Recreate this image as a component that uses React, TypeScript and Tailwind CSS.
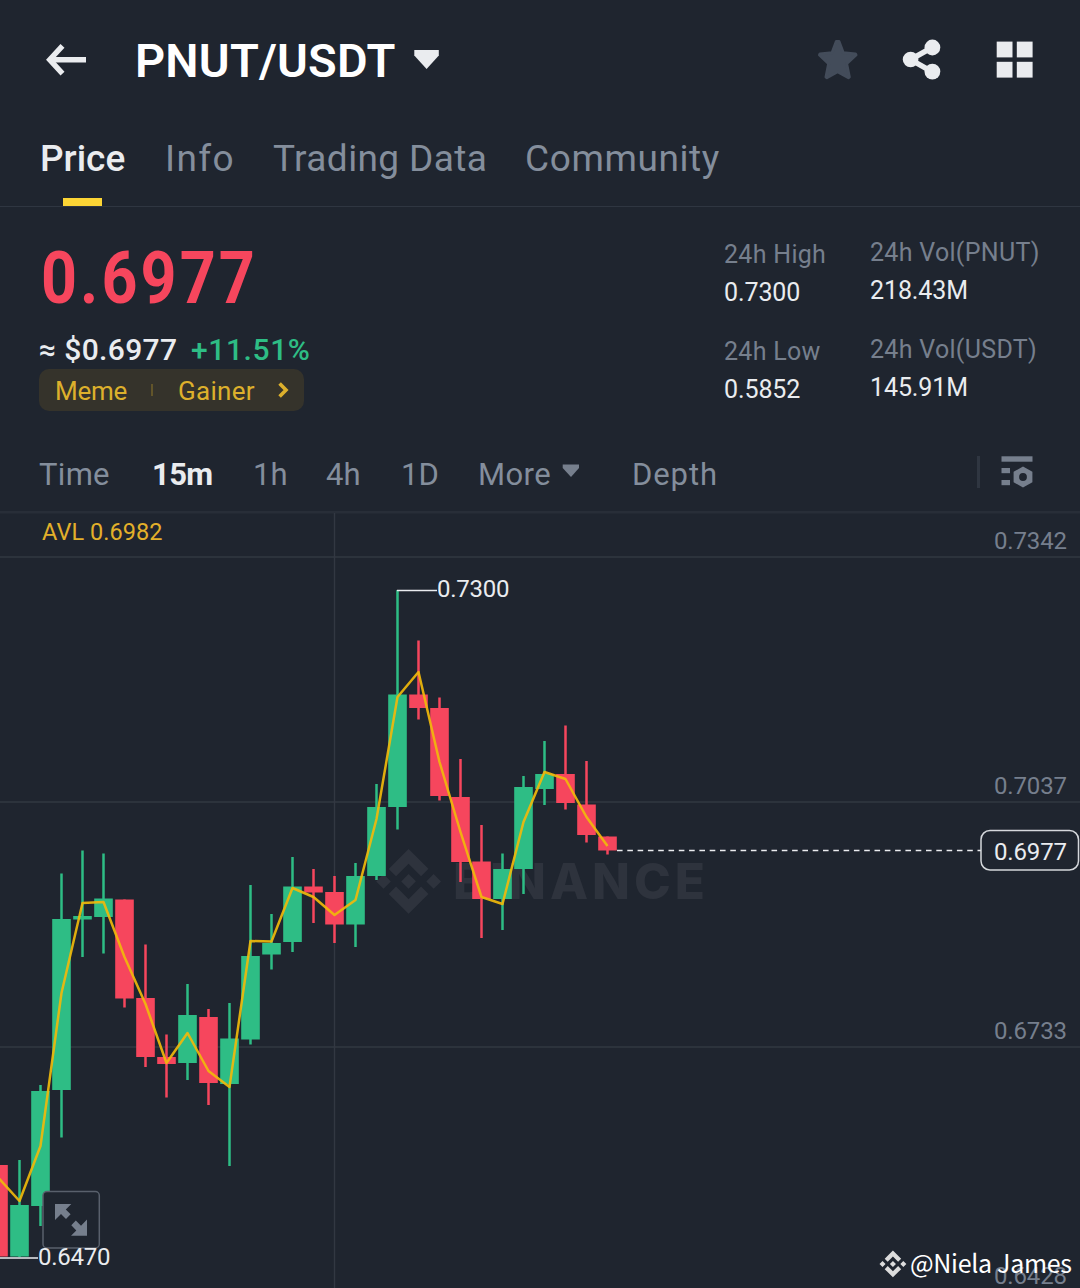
import React from 'react';

type Candle = {
  up: boolean;
  high: number;
  top: number;
  bottom: number;
  low: number;
  avl: number;
};

const FIRST_X = -1.5;
const STEP = 21;

const candles: Candle[] = [
  { up: false, high: 1165, top: 1165, bottom: 1256.5, low: 1256.5, avl: 1178 },
  { up: true, high: 1160, top: 1205, bottom: 1256.5, low: 1257, avl: 1201 },
  { up: true, high: 1085, top: 1091, bottom: 1206, low: 1226, avl: 1146 },
  { up: true, high: 873.5, top: 919, bottom: 1090, low: 1137.5, avl: 993 },
  { up: true, high: 850.5, top: 916, bottom: 919.5, low: 957, avl: 903 },
  { up: true, high: 853.5, top: 898.5, bottom: 917, low: 953.5, avl: 902 },
  { up: false, high: 899.5, top: 899.5, bottom: 998.5, low: 1007.5, avl: 957 },
  { up: false, high: 944.5, top: 998, bottom: 1057, low: 1067, avl: 1004 },
  { up: false, high: 1034.5, top: 1057, bottom: 1064, low: 1097.5, avl: 1063 },
  { up: true, high: 984, top: 1015, bottom: 1063, low: 1080, avl: 1033 },
  { up: false, high: 1009, top: 1017, bottom: 1083, low: 1105, avl: 1071 },
  { up: true, high: 1003, top: 1038.5, bottom: 1084, low: 1166, avl: 1087 },
  { up: true, high: 885, top: 956, bottom: 1039.5, low: 1044.5, avl: 941 },
  { up: true, high: 914, top: 943, bottom: 954.5, low: 969.5, avl: 941.5 },
  { up: true, high: 857, top: 886.5, bottom: 942, low: 952, avl: 888 },
  { up: false, high: 869, top: 886.5, bottom: 892.5, low: 923, avl: 897 },
  { up: false, high: 876, top: 892, bottom: 924.5, low: 943, avl: 915 },
  { up: true, high: 863, top: 876, bottom: 924.5, low: 947, avl: 900 },
  { up: true, high: 784, top: 807, bottom: 876, low: 880, avl: 819 },
  { up: true, high: 590, top: 694.5, bottom: 807, low: 829.5, avl: 697 },
  { up: false, high: 640.5, top: 694.5, bottom: 708, low: 719.5, avl: 672 },
  { up: false, high: 697.5, top: 708, bottom: 796, low: 800.5, avl: 762 },
  { up: false, high: 759, top: 797, bottom: 862, low: 882, avl: 832 },
  { up: false, high: 825, top: 861.5, bottom: 899, low: 938, avl: 897 },
  { up: true, high: 853.5, top: 869, bottom: 899, low: 930, avl: 904 },
  { up: true, high: 776, top: 787, bottom: 869, low: 894, avl: 822 },
  { up: true, high: 741, top: 774, bottom: 789, low: 805, avl: 772 },
  { up: false, high: 725.5, top: 774, bottom: 803, low: 809.5, avl: 779 },
  { up: false, high: 761, top: 804.5, bottom: 835, low: 842.5, avl: 817 },
  { up: false, high: 836.5, top: 836.5, bottom: 850.5, low: 854.5, avl: 846 },
];

const gridLabels = [
  { value: '0.7342', y: 549 },
  { value: '0.7037', y: 794 },
  { value: '0.6733', y: 1039 },
  { value: '0.6428', y: 1284 },
];

const BINANCE_PATH =
  'M16.624 13.9202l2.7175 2.7154-7.353 7.353-7.353-7.352 2.7175-2.7164 4.6355 4.6595 4.6356-4.6595zm4.6366-4.6366L24 12l-2.7154 2.7164L18.5682 12l2.6924-2.7164zm-9.272.001l2.7163 2.6914-2.7164 2.7174v-.001L9.2721 12l2.7164-2.7154zm-9.2722-.001L5.4088 12l-2.6914 2.6924L0 12l2.7164-2.7164zM11.9885.0115l7.353 7.329-2.7174 2.7154-4.6356-4.6356-4.6355 4.6595-2.7174-2.7154 7.353-7.353z';

const Header: React.FC = () => (
  <header className="flex h-[120px] items-center">
    <svg className="ml-[44px] h-[40px] w-[44px]" viewBox="44 40 44 40" fill="none" stroke="#eaecef" strokeWidth="5.4">
      <path d="M86 59.7H50" />
      <path d="M62.5 45.8L49.7 59.7L62.5 73.6" />
    </svg>
    <h1 className="ml-[47px] w-[279px] whitespace-nowrap text-[47px] font-semibold leading-none tracking-[0.2px] text-white">
      PNUT/USDT
    </h1>
    <svg className="h-[20px] w-[25px]" viewBox="414 50 25 20" fill="#eaecef">
      <path d="M414.3 50H438.8V55.5L426.6 69L414.3 55.5Z" />
    </svg>
    <svg className="ml-[378px] h-[42px] w-[42px]" viewBox="817 39 42 42" fill="#434c5a" stroke="#434c5a" strokeWidth="3" strokeLinejoin="round">
      <path d="M836.3 41.5H839L843.2 52.7L855.5 54L856 55L846.6 63.6L849.3 77L848.5 77.8L837.6 71.8L826.8 77.8L826 77L828.7 63.6L819.5 55L820 54L832.1 52.7Z" />
    </svg>
    <svg className="ml-[43px] h-[42px] w-[40px]" viewBox="902 39 40 42" fill="#eaecef" stroke="#eaecef">
      <path d="M932.3 47.3L910.5 59.6L932.3 71.8" fill="none" strokeWidth="5.4" />
      <circle cx="910.6" cy="59.5" r="7.8" stroke="none" />
      <circle cx="932.4" cy="47.5" r="7.9" stroke="none" />
      <circle cx="932.4" cy="71.6" r="7.9" stroke="none" />
    </svg>
    <svg className="ml-[54px] h-[38px] w-[38px]" viewBox="996 41 38 38" fill="#eaecef">
      <rect x="996.7" y="41.6" width="15.8" height="15.8" />
      <rect x="1016.8" y="41.6" width="15.8" height="15.8" />
      <rect x="996.7" y="61.8" width="15.8" height="15.8" />
      <rect x="1016.8" y="61.8" width="15.8" height="15.8" />
    </svg>
  </header>
);

const Tabs: React.FC = () => (
  <nav className="flex h-[87px] border-b border-[#2f3641] pl-[40px] text-[37px] leading-[78px] text-[#848e9c]">
    <div className="relative w-[125px] font-medium text-[#eaecef]">
      <span>Price</span>
      <div className="absolute bottom-0 left-[23px] h-[8px] w-[39px] bg-[#fcd535]" />
    </div>
    <span className="w-[108px] tracking-[1.4px]">Info</span>
    <span className="w-[252px] whitespace-nowrap tracking-[0.4px]">Trading Data</span>
    <span className="tracking-[0.6px]">Community</span>
  </nav>
);

const Stat: React.FC<{ label: string; value: string }> = ({ label, value }) => (
  <div className="h-[97px] whitespace-nowrap text-[25px] leading-[38px]">
    <div className="tracking-[0.3px] text-[#767f8d]">{label}</div>
    <div className="tracking-[-0.1px] text-[#eaecef]">{value}</div>
  </div>
);

const Summary: React.FC = () => (
  <section className="flex h-[223px]">
    <div className="w-[724px] pl-[39px]">
      <div className="ml-[2px] h-[123px] origin-left scale-x-[0.86] pt-[35px] text-[73px] font-bold leading-[73px] tracking-[3.6px] text-[#f6465d]">
        0.6977
      </div>
      <div className="flex h-[39px] items-center text-[30px] font-medium">
        <span className="w-[152px] whitespace-nowrap tracking-[0.35px] text-[#eaecef]">≈ $0.6977</span>
        <span className="tracking-[0.6px] text-[#2ebd85]">+11.51%</span>
      </div>
      <div className="flex h-[42px] w-[265px] items-center rounded-[10px] bg-[#35332b] pl-[16px] text-[26px] text-[#ddb02c]">
        <span className="w-[96px] pt-[2px] tracking-[-0.3px]">Meme</span>
        <span className="h-[12px] w-[2px] bg-[#62552a]" />
        <span className="ml-[25px] w-[100px] pt-[2px] tracking-[0.3px]">Gainer</span>
        <svg className="h-[16px] w-[12px]" viewBox="0 0 12 16" fill="none" stroke="#ddb02c" strokeWidth="3.6">
          <path d="M1.6 1.6L8 8L1.6 14.4" />
        </svg>
      </div>
    </div>
    <div className="w-[146px] pt-[29px]">
      <Stat label="24h High" value="0.7300" />
      <Stat label="24h Low" value="0.5852" />
    </div>
    <div className="pt-[27px]">
      <Stat label="24h Vol(PNUT)" value="218.43M" />
      <Stat label="24h Vol(USDT)" value="145.91M" />
    </div>
  </section>
);

const Intervals: React.FC = () => (
  <div className="flex h-[81px] items-center pl-[39px] pt-[9px] text-[31px] text-[#848e9c]">
    <span className="w-[113px] tracking-[0.3px]">Time</span>
    <span className="w-[101px] font-bold tracking-[-0.6px] text-[#eaecef]">15m</span>
    <span className="w-[73px]">1h</span>
    <span className="w-[75px]">4h</span>
    <span className="w-[77px]">1D</span>
    <span className="w-[83px] tracking-[0.4px]">More</span>
    <svg className="mb-[9px] ml-[1px] mr-[52px] h-[13px] w-[18px]" viewBox="0 0 18 13" fill="#767f8d">
      <path d="M0.7 0.5H17V4L9 13L0.7 4Z" />
    </svg>
    <span className="w-[345px] tracking-[0.9px]">Depth</span>
    <span className="mb-[6px] h-[32px] w-[3px] bg-[#2f3641]" />
    <svg className="mb-[6px] ml-[21px] h-[32px] w-[32px]" viewBox="1001 456 32 32" fill="#767f8d">
      <rect x="1001.5" y="456.3" width="31" height="5.4" />
      <rect x="1001.5" y="468" width="8.5" height="5.2" />
      <rect x="1001.5" y="480" width="8.5" height="5.2" />
      <path fillRule="evenodd" d="M1023 466.5L1032.4 471.8V482.2L1023 487.6L1013.6 482.2V471.8ZM1023 473.1A3.9 3.9 0 1 0 1023 480.9A3.9 3.9 0 1 0 1023 473.1Z" />
    </svg>
  </div>
);

const Chart: React.FC = () => {
  const avlLine = candles.map((c, i) => `${FIRST_X + i * STEP},${c.avl}`).join(' ');

  return (
    <svg className="block h-[777px] w-[1080px]" viewBox="0 511 1080 777" fontSize="24">
      {/* Grid */}
      <rect x="0" y="511" width="1080" height="2.5" fill="#282e38" />
      <g stroke="#323842" strokeWidth="1.4">
        <path d="M0 557H1080M0 802H1080M0 1047H1080M334.5 513V1288" />
      </g>

      {/* Watermark */}
      <g fill="#2e333d">
        <path transform="translate(376.2 849) scale(2.7)" d={BINANCE_PATH} />
        <text x="453" y="899" fontSize="49.5" fontWeight="800" textLength="252" fontFamily="Inter, sans-serif">
          BINANCE
        </text>
      </g>

      {/* Candles */}
      {candles.map((c, i) => {
        const x = FIRST_X + i * STEP;
        return (
          <g key={i} fill={c.up ? '#2ebd85' : '#f6465d'}>
            <rect x={x - 1.25} y={c.high} width="2.5" height={c.low - c.high} />
            <rect x={x - 9.3} y={c.top} width="18.6" height={c.bottom - c.top} />
          </g>
        );
      })}
      <polyline points={avlLine} fill="none" stroke="#f0b90b" strokeOpacity="0.92" strokeWidth="2.5" strokeLinejoin="round" />

      <text x="42" y="540" fill="#e3b02a" fontSize="23.5" textLength="120.5">AVL 0.6982</text>

      {/* High and low markers */}
      <path d="M397 590.5H437M0 1258H38" stroke="#eaecef" strokeWidth="1.4" />
      <text x="437" y="597" fill="#eaecef" textLength="72.5">0.7300</text>

      {/* Expand button */}
      <rect x="43" y="1191.5" width="56.3" height="56.5" rx="4" fill="#1f252f" stroke="#59606c" strokeWidth="1.5" />
      <g fill="#767f8d">
        <path d="M55 1204H71.3L65.8 1209.5L70.6 1214.3L66 1219L61 1214L55 1220Z" />
        <path d="M87 1235.8H71L76.3 1230.4L71.3 1225.2L75.8 1220.6L81 1225.8L87 1219.5Z" />
      </g>
      <text x="38" y="1265" fill="#eaecef" textLength="72.5">0.6470</text>

      {/* Price axis */}
      {gridLabels.map((g) => (
        <text key={g.value} x="994" y={g.y} fill="#767f8d" textLength="73">{g.value}</text>
      ))}
      <path d="M617 850.5H981" stroke="#eaecef" strokeWidth="1.5" strokeDasharray="5.6 4.7" />
      <rect x="981" y="830.5" width="97.5" height="39.5" rx="9" fill="#1f252f" stroke="#d5d8dc" strokeWidth="1.5" />
      <text x="994" y="860" fill="#eaecef" textLength="73">0.6977</text>

      {/* Author */}
      <path transform="translate(879.5 1250.5) scale(1.12)" d={BINANCE_PATH} fill="#dcdcdc" />
      <text x="910" y="1273" fill="#ffffff" fontSize="25" textLength="162" fontFamily="'Noto Sans CJK SC', sans-serif">
        @Niela James
      </text>
    </svg>
  );
};

const App: React.FC = () => {
  return (
    <div className="h-[1288px] w-[1080px] overflow-hidden bg-[#1f252f] font-['Roboto',sans-serif]">
      <Header />
      <Tabs />
      <Summary />
      <Intervals />
      <Chart />
    </div>
  );
};

export default App;
